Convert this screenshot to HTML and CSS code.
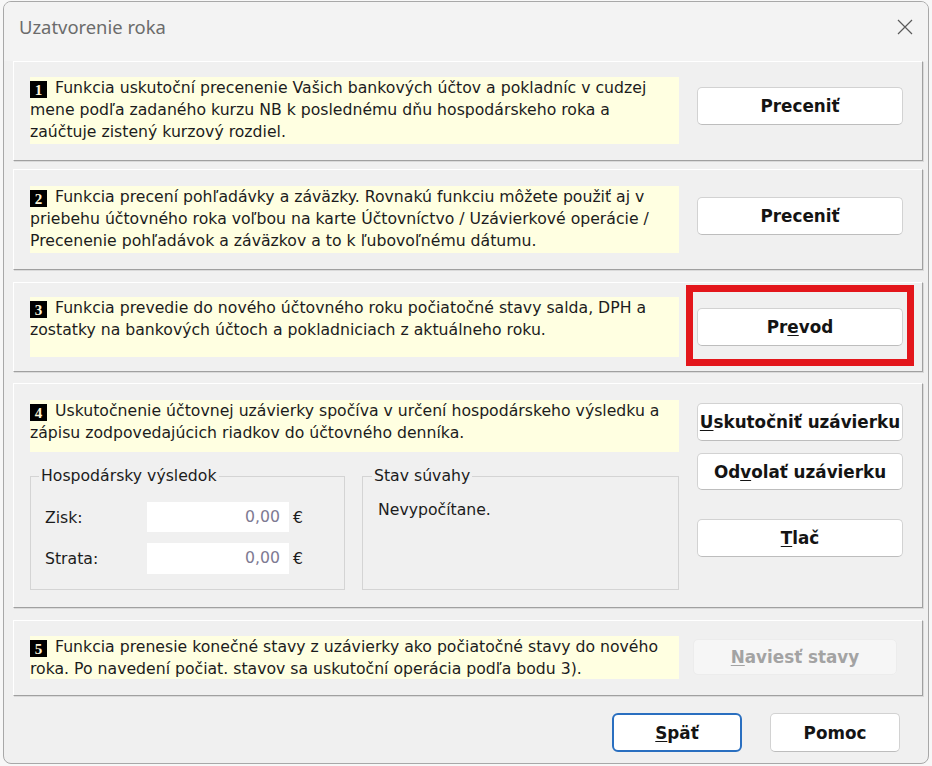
FILE: index.html
```html
<!DOCTYPE html>
<html lang="sk">
<head>
<meta charset="utf-8">
<title>Uzatvorenie roka</title>
<link rel="stylesheet" href="styles.css">
</head>
<body>
<div class="window">
  <div class="titlebar">
    <span class="title">Uzatvorenie roka</span>
    <svg class="close" width="16" height="16" viewBox="0 0 16 16"><path d="M1 1 L15 15 M15 1 L1 15" stroke="#5a5a5a" stroke-width="1.2" fill="none"/></svg>
  </div>
  <div class="content">
    <div class="panel p1">
      <div class="info h3"><span class="badge">1</span>Funkcia uskutoční precenenie Vašich bankových účtov a pokladníc v cudzej<br>mene podľa zadaného kurzu NB k poslednému dňu hospodárskeho roka a<br>zaúčtuje zistený kurzový rozdiel.</div>
      <div class="btncol"><button class="btn b1">Preceniť</button></div>
    </div>
    <div class="panel p2">
      <div class="info h3"><span class="badge">2</span>Funkcia precení pohľadávky a záväzky. Rovnakú funkciu môžete použiť aj v<br>priebehu účtovného roka voľbou na karte Účtovníctvo / Uzávierkové operácie /<br>Precenenie pohľadávok a záväzkov a to k ľubovoľnému dátumu.</div>
      <div class="btncol"><button class="btn b1">Preceniť</button></div>
    </div>
    <div class="panel p3">
      <div class="info h3b"><span class="badge">3</span>Funkcia prevedie do nového účtovného roku počiatočné stavy salda, DPH a<br>zostatky na bankových účtoch a pokladniciach z aktuálneho roku.</div>
      <div class="btncol hl-wrap">
        <button class="btn b1">Pr<u>e</u>vod</button>
        <div class="highlight"></div>
      </div>
    </div>
    <div class="panel p4">
      <div class="leftcol">
        <div class="info h2"><span class="badge">4</span>Uskutočnenie účtovnej uzávierky spočíva v určení hospodárskeho výsledku a<br>zápisu zodpovedajúcich riadkov do účtovného denníka.</div>
        <div class="groups">
          <fieldset class="group g1">
            <legend>Hospodársky výsledok</legend>
            <div class="frow r1"><span class="flabel">Zisk:</span><span class="field">0,00</span><span class="cur">€</span></div>
            <div class="frow r2"><span class="flabel">Strata:</span><span class="field">0,00</span><span class="cur">€</span></div>
          </fieldset>
          <fieldset class="group g2">
            <legend>Stav súvahy</legend>
            <div class="status">Nevypočítane.</div>
          </fieldset>
        </div>
      </div>
      <div class="btncol stack">
        <button class="btn b4a"><u>U</u>skutočniť uzávierku</button>
        <button class="btn b4b">Od<u>v</u>olať uzávierku</button>
        <button class="btn b4c"><u>T</u>lač</button>
      </div>
    </div>
    <div class="panel p5">
      <div class="info h2s"><span class="badge">5</span>Funkcia prenesie konečné stavy z uzávierky ako počiatočné stavy do nového<br>roka. Po navedení počiat. stavov sa uskutoční operácia podľa bodu 3).</div>
      <div class="btncol"><button class="btn b5" disabled><u>N</u>aviesť stavy</button></div>
    </div>
    <div class="footer">
      <button class="btn fbtn default"><u>S</u>päť</button>
      <button class="btn fbtn">Pomoc</button>
    </div>
  </div>
</div>
</body>
</html>
```

FILE: styles.css
```css
html, body {
  margin: 0;
  padding: 0;
  background: #f7f7f7;
}
body {
  width: 932px;
  height: 766px;
  overflow: hidden;
  font-family: "DejaVu Sans", sans-serif;
  font-size: 15.7px;
  color: #1c1c1c;
}
.window {
  box-sizing: border-box;
  margin: 1px 0 0 3px;
  width: 926px;
  height: 763px;
  border: 1px solid #a8a8a8;
  border-radius: 8px;
  background: #f0f0f0;
  overflow: hidden;
}
.titlebar {
  height: 59px;
  display: flex;
  align-items: flex-start;
  justify-content: space-between;
  background: #f3f3f3;
}
.title {
  font-family: "Noto Sans", sans-serif;
  font-size: 18.4px;
  line-height: 24px;
  color: #6b6b6b;
  margin: 13px 0 0 15px;
}
.close {
  margin: 17px 15px 0 0;
}
.content {
  padding: 0 4px 0 9px;
}
.panel {
  box-sizing: border-box;
  width: 910px;
  display: flex;
  align-items: flex-start;
  border-top: 1px solid #ffffff;
  border-left: 1px solid #ffffff;
  border-right: 1px solid #a0a0a0;
  border-bottom: 1px solid #a0a0a0;
  box-shadow: 1px 1px 0 #dadada;
  padding-left: 16px;
}
.p1 { height: 100px; padding-top: 15px; }
.p2 { height: 101px; padding-top: 16px; margin-top: 8px; }
.p3 { height: 90px; padding-top: 14px; margin-top: 12px; }
.p4 { height: 225px; padding-top: 16px; margin-top: 11px; }
.p5 { height: 76px; padding-top: 15px; margin-top: 12px; }

.info {
  box-sizing: border-box;
  width: 649px;
  background: #ffffe1;
  line-height: 22px;
  white-space: nowrap;
}
.h3 { height: 67px; }
.h3b { height: 60px; }
.h2 { height: 52px; }
.h2s { height: 43px; }

.badge {
  display: inline-block;
  width: 17px;
  height: 17px;
  margin-right: 8px;
  background: #000;
  color: #fff6d8;
  font-family: "Liberation Serif", serif;
  font-weight: bold;
  font-size: 15px;
  line-height: 18px;
  text-align: center;
  vertical-align: -2px;
}
.btncol {
  margin-left: 18px;
  width: 206px;
  display: flex;
  flex-direction: column;
}
.btn {
  box-sizing: border-box;
  width: 206px;
  height: 38px;
  padding: 0;
  background: #ffffff;
  border: 1px solid #d2d2d2;
  border-bottom-color: #bdbdbd;
  border-radius: 5px;
  font-family: "DejaVu Sans", sans-serif;
  font-weight: bold;
  font-size: 16.8px;
  color: #141414;
  text-align: center;
}
.btn u { text-decoration-thickness: 1px; text-underline-offset: 2px; }
.b1 { margin-top: 10px; }
.p2 .b1 { margin-top: 11px; }
.p3 .b1 { margin-top: 11px; }

.hl-wrap { position: relative; }
.highlight {
  position: absolute;
  left: -11px;
  top: -12px;
  width: 228px;
  height: 81px;
  box-sizing: border-box;
  border: 7px solid #e3161b;
}

.leftcol { width: 649px; }
.stack .b4a { margin-top: 3px; }
.stack .b4b { margin-top: 12px; height: 37px; }
.stack .b4c { margin-top: 29px; }

.groups {
  display: flex;
  gap: 17px;
  margin-top: 14px;
}
.group {
  box-sizing: border-box;
  margin: 0;
  border: 1px solid #d4d4d4;
  padding: 0 0 0 14px;
  height: 124px;
}
.group legend {
  padding: 0 2px;
  margin-left: -6px;
  line-height: 20px;
  color: #1c1c1c;
}
.g1 { width: 316px; }
.g2 { width: 318px; padding-left: 15px; }
.frow {
  display: flex;
  align-items: center;
  height: 30px;
}
.r1 { margin-top: 16px; }
.r2 { margin-top: 11px; height: 31px; }
.flabel { width: 102px; }
.field {
  box-sizing: border-box;
  width: 142px;
  height: 100%;
  background: #ffffff;
  text-align: right;
  padding-right: 9px;
  line-height: 30px;
  color: #7e7a92;
}
.cur { margin-left: 4px; }
.status { margin-top: 14px; line-height: 20px; }

.b5 {
  margin-top: 3px;
  width: 204px;
  height: 36px;
  margin-left: -4px;
  background: #f6f6f6;
  border-color: #ececec;
  color: #a3a3a3;
}
.footer {
  display: flex;
  justify-content: flex-end;
  gap: 28px;
  margin-top: 17px;
  padding-right: 24px;
}
.fbtn { width: 130px; height: 39px; }
.fbtn.default {
  border: 2px solid #2a6fc0;
  border-radius: 6px;
}
```
